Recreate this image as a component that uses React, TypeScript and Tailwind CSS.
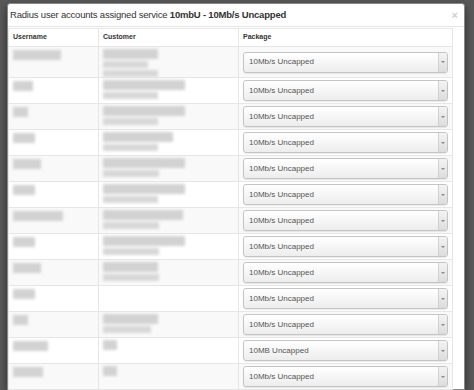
import React from 'react'

type Row = {
  user: number[]
  customer: number[]
  pkg: string
}

const rows: Row[] = [
  { user: [48], customer: [55, 45, 55], pkg: '10Mb/s Uncapped' },
  { user: [20], customer: [82, 55], pkg: '10Mb/s Uncapped' },
  { user: [15], customer: [82, 55], pkg: '10Mb/s Uncapped' },
  { user: [22], customer: [70, 55], pkg: '10Mb/s Uncapped' },
  { user: [28], customer: [82, 56], pkg: '10Mb/s Uncapped' },
  { user: [22], customer: [82, 55], pkg: '10Mb/s Uncapped' },
  { user: [50], customer: [80, 56], pkg: '10Mb/s Uncapped' },
  { user: [22], customer: [82, 56], pkg: '10Mb/s Uncapped' },
  { user: [28], customer: [55, 56], pkg: '10Mb/s Uncapped' },
  { user: [22], customer: [], pkg: '10Mb/s Uncapped' },
  { user: [15], customer: [55, 48], pkg: '10Mb/s Uncapped' },
  { user: [35], customer: [14], pkg: '10MB Uncapped' },
  { user: [30], customer: [14], pkg: '10Mb/s Uncapped' },
]

function Blur({ widths }: { widths: number[] }) {
  return (
    <div className="flex flex-col gap-[2px] blur-[1.5px]">
      {widths.map((w, i) => (
        <div
          key={i}
          className={i === 0 ? 'h-[10px] bg-[#d2d2d2]' : 'h-[7px] bg-[#d8d8d8]'}
          style={{ width: w }}
        />
      ))}
    </div>
  )
}

function PackageSelect({ value }: { value: string }) {
  return (
    <div className="flex h-[21px] w-full items-stretch rounded-[3px] border border-[#c4c4c4] bg-gradient-to-b from-white to-[#ededed] shadow-[0_1px_1px_rgba(0,0,0,0.08)]">
      <div className="flex flex-1 items-center pl-[5px] text-[8px] text-[#555]">{value}</div>
      <div className="flex w-[9px] items-center justify-center rounded-r-[2px] border-l border-[#d0d0d0] bg-gradient-to-b from-[#f4f4f4] to-[#dcdcdc]">
        <div className="h-0 w-0 border-x-[2px] border-t-[2px] border-x-transparent border-t-[#888]" />
      </div>
    </div>
  )
}

export default function App() {
  return (
    <div
      className="flex h-[390px] w-[474px] overflow-hidden bg-[#595959] pl-[7px] pr-[9px] pt-[3px]"
      style={{ fontFamily: '"Liberation Sans", Arial, sans-serif' }}
    >
      <div className="flex flex-1 flex-col rounded-t-[3px] border border-[#888] bg-white shadow-[0_3px_9px_rgba(0,0,0,0.5)]">
        <div className="flex h-[23px] shrink-0 items-center justify-between border-b border-[#e5e5e5] pl-[2px] pr-[6px]">
          <h4 className="text-[9.5px] tracking-[-0.2px] text-[#333]">
            Radius user accounts assigned service <b>10mbU - 10Mb/s Uncapped</b>
          </h4>
          <span className="text-[11px] leading-none font-bold text-[#cfcfcf]">×</span>
        </div>
        <div className="pt-[1px] pr-[11px]">
          <table className="w-full border-collapse border border-[#e6e6e6] text-left">
            <thead>
              <tr>
                <th className="h-[18px] w-[90px] border border-[#e6e6e6] pl-[4px] text-[7px] font-bold text-[#333]">Username</th>
                <th className="h-[18px] w-[140px] border border-[#e6e6e6] pl-[4px] text-[7px] font-bold text-[#333]">Customer</th>
                <th className="h-[18px] border border-[#e6e6e6] pl-[4px] text-[7px] font-bold text-[#333]">Package</th>
              </tr>
            </thead>
            <tbody>
              {rows.map((r, i) => (
                <tr key={i} className={i % 2 === 0 ? 'bg-[#f9f9f9]' : 'bg-white'}>
                  <td className="h-[26px] border border-[#e6e6e6] px-[4px] pt-[3px] align-top">
                    <Blur widths={r.user} />
                  </td>
                  <td className="h-[26px] border border-[#e6e6e6] px-[4px] pt-[2px] align-top">
                    <Blur widths={r.customer} />
                  </td>
                  <td className="h-[26px] border border-[#e6e6e6] px-[4px] align-middle">
                    <PackageSelect value={r.pkg} />
                  </td>
                </tr>
              ))}
            </tbody>
          </table>
        </div>
      </div>
    </div>
  )
}
